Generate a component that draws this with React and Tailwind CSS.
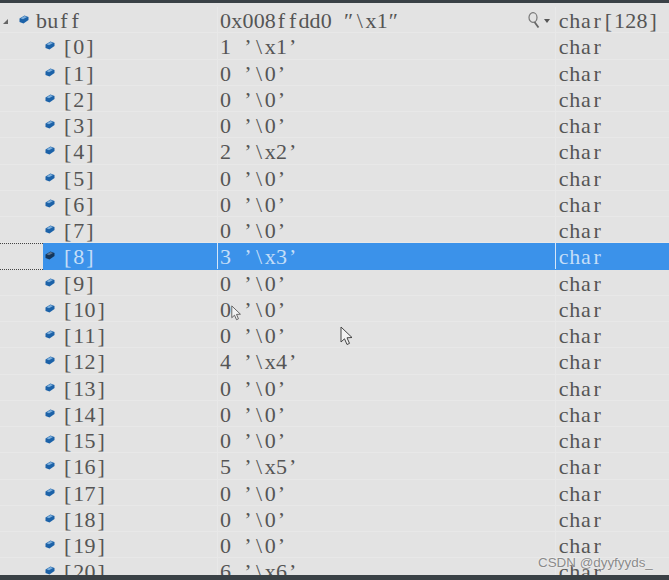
import React from 'react';

const rows = [
  ['[0]', '1 ’\\x1’'], ['[1]', '0 ’\\0’'], ['[2]', '0 ’\\0’'], ['[3]', '0 ’\\0’'],
  ['[4]', '2 ’\\x2’'], ['[5]', '0 ’\\0’'], ['[6]', '0 ’\\0’'], ['[7]', '0 ’\\0’'],
  ['[8]', '3 ’\\x3’'], ['[9]', '0 ’\\0’'], ['[10]', '0 ’\\0’'], ['[11]', '0 ’\\0’'],
  ['[12]', '4 ’\\x4’'], ['[13]', '0 ’\\0’'], ['[14]', '0 ’\\0’'], ['[15]', '0 ’\\0’'],
  ['[16]', '5 ’\\x5’'], ['[17]', '0 ’\\0’'], ['[18]', '0 ’\\0’'], ['[19]', '0 ’\\0’'],
  ['[20]', '6 ’\\x6’'],
];

// the debugger font is monospaced with serif glyphs, so every char gets its own cell
const Mono = ({ text }) => (
  <span className="flex whitespace-pre pt-[3px] font-['Liberation_Serif',serif] text-[22px] leading-none">
    {text.split('').map((ch, i) => (
      <span key={i} className="w-[11.2px] flex-none text-center">{ch}</span>
    ))}
  </span>
);

const Cube = ({ dark }) => (
  <svg width="10" height="9" viewBox="0 0 10 9" className="flex-none">
    <path d="M0.5 3.5 L5.5 0.5 L9.5 2 L9.5 5 L4.5 8.5 L0.5 7 Z" fill={dark ? '#14365c' : '#1c62a8'} />
    <path d="M1.5 3.2 L5.5 1 L8 2 L4 4.2 Z" fill={dark ? '#5c7590' : '#7fb0dc'} />
  </svg>
);

const Cursor = ({ className }) => (
  <svg width="14" height="20" viewBox="0 0 14 20" className={className}>
    <path d="M1 1 L1 16 L4.5 12.8 L7 18.5 L9.5 17.4 L7 11.8 L12 11.5 Z" fill="#f2f2f2" stroke="#444" strokeWidth="1" />
  </svg>
);

const Row = ({ name, value, type, indent, selected, children }) => (
  <div className={`flex h-[26.25px] flex-none items-center border-b ${selected ? 'border-transparent text-[#c4def8]' : 'border-[#e8e8e8] text-[#555]'}`}>
    <div className={`flex h-full w-[217px] flex-none items-center ${indent ? 'pl-[45px]' : 'pl-[19px]'}`}>
      {children}
      <Cube dark={selected} />
      <span className="ml-[7px]"><Mono text={name} /></span>
    </div>
    <div className={`flex h-full w-[338px] flex-none items-center justify-between border-l pl-[2px] ${selected ? 'border-[#d5e6f8]' : 'border-[#e8e8e8]'}`}>
      <Mono text={value} />
      {!indent && (
        <span className="flex items-center gap-[4px] pr-[5px]">
          <svg width="12" height="16" viewBox="0 0 12 16">
            <ellipse cx="5" cy="5.5" rx="4" ry="4.8" fill="none" stroke="#777" strokeWidth="1.2" />
            <path d="M6.5 10 L10.5 15.5" stroke="#666" strokeWidth="1.8" />
          </svg>
          <span className="mt-[2px] h-0 w-0 border-x-[3px] border-t-[4px] border-x-transparent border-t-[#555]" />
        </span>
      )}
    </div>
    <div className={`flex h-full flex-1 items-center border-l pl-[2px] ${selected ? 'border-[#d5e6f8]' : 'border-[#e8e8e8]'}`}>
      <Mono text={type} />
    </div>
  </div>
);

export default function App() {
  return (
    <div className="relative flex h-[580px] w-[669px] flex-col overflow-hidden bg-[#e3e3e3]">
      <div className="h-[3px] flex-none bg-[#3a4146]" />
      <div className="flex min-h-0 flex-1 flex-col overflow-hidden pt-[4px]">
        <Row name="buff" value={'0x008ffdd0 ″\\x1″'} type="char[128]">
          <span className="absolute left-[3px] top-[19px] h-0 w-0 border-b-[5px] border-l-[5px] border-b-[#666] border-l-transparent" />
        </Row>
        {rows.map(([name, value], i) => (
          <div key={name} className="relative flex-none">
            {i === 8 && (
              <div className="absolute inset-y-0 left-0 w-[43px] border-y border-dotted border-[#444]" />
            )}
            {i === 8 ? (
              <div className="ml-[43px] w-[626px] bg-[#3b92ea] [&>div>div:first-child]:ml-[-43px]">
                <Row name={name} value={value} type="char" indent selected />
              </div>
            ) : (
              <Row name={name} value={value} type="char" indent />
            )}
          </div>
        ))}
      </div>
      <div className="h-[5px] flex-none bg-[#3a4146]" />
      <Cursor className="absolute left-[231px] top-[305px] h-[16px] w-[11px]" />
      <Cursor className="absolute left-[340px] top-[326px]" />
      <span className="absolute left-[538px] top-[554px] font-['Liberation_Sans',sans-serif] text-[13.4px] leading-[17px] text-[#8a8a8a] [text-shadow:0_0_2px_#fff]">
        CSDN @dyyfyyds_
      </span>
    </div>
  );
}
